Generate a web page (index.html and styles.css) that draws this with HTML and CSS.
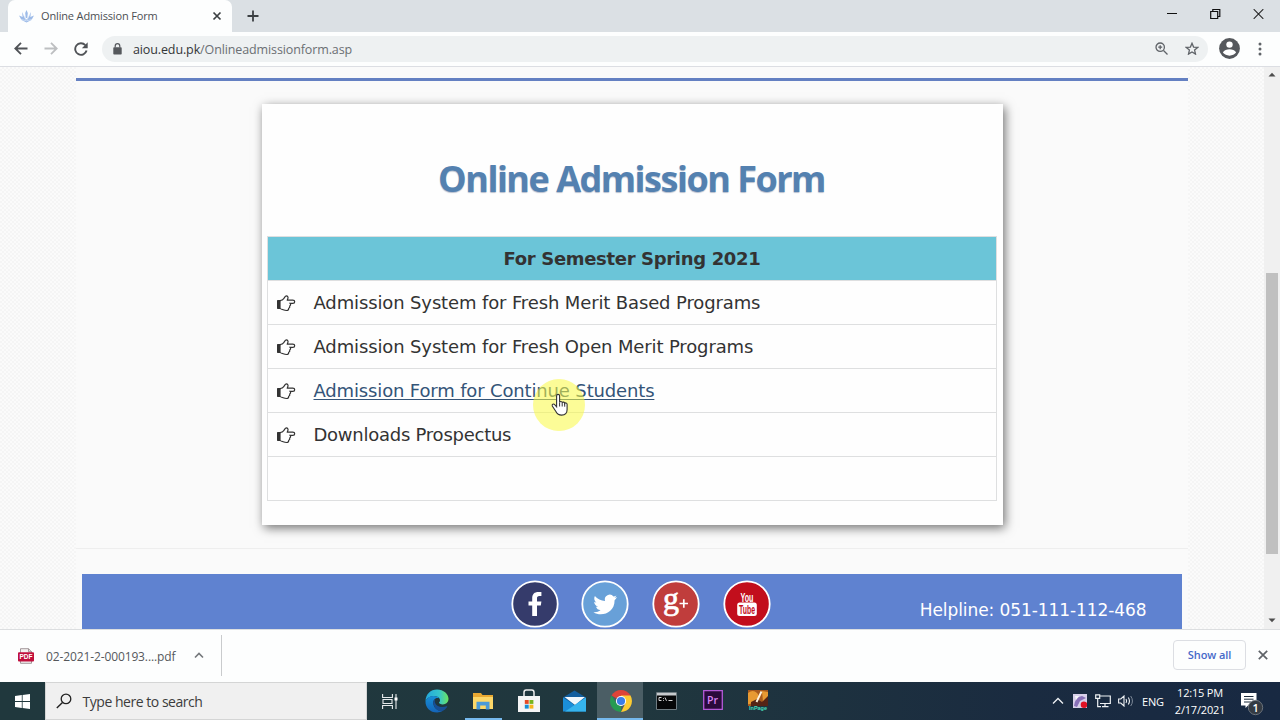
FILE: index.html
```html
<!DOCTYPE html>
<html lang="en">
<head>
    <meta charset="utf-8">
    <title>Online Admission Form</title>
    <link rel="stylesheet" href="styles.css">
</head>
<body>

    <!-- symbols used more than once -->
    <svg class="defs">
        <symbol id="hand" viewBox="0 0 20 17">
            <path d="M1 5.2h3.6v8.6H1z" fill="#333"/>
            <path d="M4.600 5.400c2 0 2.600-1.200 3.500-2.300C8.900 2.200 9.200.9 10.300.9c1.500 0 2 1.300 1.600 2.500-.2.700-.6 1.100-.6 1.700h5.500c1.300 0 1.900.8 1.900 1.600s-.7 1.600-1.900 1.600h-2.700c.9 1.200.5 2.200-.4 2.700.3 1.200-.2 2-1 2.300.1 1.500-.7 2.200-2.200 2.200-2.600 0-3.600-1.300-5.900-1.500M1.700 5.600h3M1.700 13.500h3" fill="none" stroke="#333" stroke-width="1.200"/>
        </symbol>
    </svg>

    <div class="tabs">
        <div class="tab">
            <svg class="favicon" width="15" height="13" viewBox="0 0 15 13">
                <path d="M7.500 0l1.300 3-.5 5H6.700l-.5-5zM3 2l3 6 1.500 1.500L9 8l3-6-.6 5L15 5.500 12.500 10l-5 2.600-5-2.600L0 5.500 3.600 7z" fill="#9dbbe8"/>
                <path d="M2 9.500q5.500 2.500 11 0M4 4l3 6M11 4l-3 6" stroke="#e6eefb" stroke-width=".6" fill="none"/>
            </svg>
            <span class="tab-title">Online Admission Form</span>
            <svg width="10" height="10" viewBox="0 0 10 10"><path d="M1.500 1.500l7 7M8.500 1.500l-7 7" stroke="#3c4043" stroke-width="1.700"/></svg>
        </div>
        <svg class="new-tab" width="12" height="12" viewBox="0 0 12 12"><path d="M6 .5v11M.5 6h11" stroke="#3c4043" stroke-width="1.800"/></svg>
        <div class="win-buttons">
            <svg width="10" height="10" viewBox="0 0 10 10"><path d="M0 4.500h10" stroke="#111"/></svg>
            <svg width="11" height="10" viewBox="0 0 11 10"><path d="M.7 2.500h7v7h-7zM2.800 2.500v-2h7v7H7.700" fill="none" stroke="#111" stroke-width="1.200"/></svg>
            <svg width="11" height="10" viewBox="0 0 11 10"><path d="M.7.2l9.600 9.600M10.300.2L.7 9.800" stroke="#222" stroke-width="1.100"/></svg>
        </div>
    </div>

    <div class="toolbar">
        <svg class="back" width="14" height="13" viewBox="0 0 14 13"><path d="M13.500 6.500H1.500M7 .8L1.300 6.500 7 12.200" fill="none" stroke="#505357" stroke-width="1.800"/></svg>
        <svg class="forward" width="14" height="13" viewBox="0 0 14 13"><path d="M.5 6.500h12M7 .8l5.700 5.700L7 12.200" fill="none" stroke="#bdbfc1" stroke-width="1.800"/></svg>
        <svg class="reload" width="14" height="14" viewBox="0 0 14 14"><path d="M12.600 8.600A5.800 5.800 0 1 1 11.300 3.100" fill="none" stroke="#505357" stroke-width="1.900"/><path d="M13.700.2v6H7.900z" fill="#505357"/></svg>
        <div class="address">
            <svg class="lock" width="9" height="12" viewBox="0 0 9 12"><rect x=".3" y="4.200" width="8.400" height="7.300" rx=".8" fill="#55585c"/><path d="M2.200 4.500V3a2.300 2.300 0 0 1 4.600 0v1.500" fill="none" stroke="#55585c" stroke-width="1.200"/></svg>
            <span class="url"><b>aiou.edu.pk</b>/Onlineadmissionform.asp</span>
            <svg class="zoom" width="13" height="13" viewBox="0 0 13 13"><circle cx="5.200" cy="5.200" r="4.200" fill="none" stroke="#5f6368" stroke-width="1.300"/><path d="M8.500 8.500l4 4M3.200 5.200h4M5.200 3.200v4" stroke="#5f6368" stroke-width="1.300"/></svg>
            <svg width="14" height="13" viewBox="0 0 14 13"><path d="M7 1.300l1.600 3.800 4.100.3-3.100 2.700.9 4L7 10l-3.500 2.100.9-4-3.100-2.700 4.100-.3z" fill="none" stroke="#5f6368" stroke-width="1.300"/></svg>
        </div>
        <svg class="profile" width="21" height="21" viewBox="0 0 21 21"><circle cx="10.500" cy="10.500" r="10.400" fill="#55585c"/><circle cx="10.500" cy="6.600" r="3.200" fill="#fff"/><path d="M3.900 14.600c1-2.300 4.100-3.300 6.600-3.300s5.600 1 6.600 3.300c-1.400 1.800-4 3.100-6.600 3.100s-5.200-1.300-6.600-3.100z" fill="#fff"/></svg>
        <svg class="dots" width="4" height="14" viewBox="0 0 4 14"><g fill="#5f6368"><circle cx="2" cy="2" r="1.500"/><circle cx="2" cy="7" r="1.500"/><circle cx="2" cy="12" r="1.500"/></g></svg>
    </div>

    <div class="view">
        <div class="page">
            <div class="container">
                <div class="card">
                    <h1>Online Admission Form</h1>
                    <table>
                        <tr><th>For Semester Spring 2021</th></tr>
                        <tr><td><svg class="hand"><use href="#hand"/></svg><a>Admission System for Fresh Merit Based Programs</a></td></tr>
                        <tr><td><svg class="hand"><use href="#hand"/></svg><a>Admission System for Fresh Open Merit Programs</a></td></tr>
                        <tr><td><svg class="hand"><use href="#hand"/></svg><a class="hover">Admission Form for Continue Students</a></td></tr>
                        <tr><td><svg class="hand"><use href="#hand"/></svg><a class="downloads">Downloads Prospectus</a></td></tr>
                        <tr><td></td></tr>
                    </table>
                </div>
                <hr>
                <div class="footer">
                    <div class="social">
                        <svg width="48" height="48" viewBox="0 0 48 48"><circle cx="24" cy="24" r="22.700" fill="#353b6b" stroke="#fff" stroke-width="1.800"/><path d="M21.200 36V25.600h-3.700v-4.200h3.700v-3.300c0-4.200 2.300-6.200 6.200-6.200h3v4.200h-2c-2 0-2.400.9-2.400 2.300v3h4.400l-.6 4.200H26V36z" fill="#fff"/></svg>
                        <svg width="48" height="48" viewBox="0 0 48 48"><circle cx="24" cy="24" r="22.700" fill="#68a0d8" stroke="#fff" stroke-width="1.800"/><path d="M36 17.100c-.8.400-1.700.6-2.500.7.900-.6 1.600-1.400 1.900-2.400-.9.500-1.900.9-2.900 1.100a4.900 4.900 0 0 0-8.500 4.400c-4-.2-7.700-2.100-10.100-5-1.300 2.300-.6 5.100 1.500 6.500-.8 0-1.500-.2-2.200-.6 0 2.300 1.600 4.300 4 4.900-.7.200-1.500.2-2.200.1.600 1.900 2.400 3.300 4.600 3.400a9.900 9.900 0 0 1-7.200 2c7.900 4.900 21.300 1 21.200-12 1-.7 1.800-1.700 2.400-3.100z" fill="#fff"/></svg>
                        <svg width="48" height="48" viewBox="0 0 48 48"><circle cx="24" cy="24" r="22.700" fill="#c03d3c" stroke="#fff" stroke-width="1.800"/><text x="11" y="28.500" class="gplus">g</text><path d="M27.500 23.500h8.500M31.800 19.200v8.600" stroke="#fff" stroke-width="1.700"/></svg>
                        <svg width="48" height="48" viewBox="0 0 48 48"><circle cx="24" cy="24" r="22.700" fill="#c20e1c" stroke="#fff" stroke-width="1.800"/><rect x="14.200" y="22.500" width="19.600" height="13.500" rx="2.500" fill="#fff"/><text x="17.500" y="21.500" class="yt" textLength="13" lengthAdjust="spacingAndGlyphs">You</text><text x="16" y="34" class="yt tube" textLength="16" lengthAdjust="spacingAndGlyphs">Tube</text></svg>
                    </div>
                    <span class="helpline">Helpline: 051-111-112-468</span>
                </div>
            </div>
        </div>
        <div class="scrollbar">
            <svg width="8" height="5" viewBox="0 0 8 5"><path d="M.5 4.500h7L4 .8z" fill="#4d4d4d"/></svg>
            <div class="thumb"></div>
            <svg width="8" height="5" viewBox="0 0 8 5"><path d="M.5.500h7L4 4.200z" fill="#4d4d4d"/></svg>
        </div>
    </div>

    <div class="downloads-bar">
        <svg class="pdf-icon" width="16" height="16" viewBox="0 0 16 16"><path d="M2.500.7h8l3 3v11.600h-11z" fill="#f4f0f0" stroke="#8d8083" stroke-width=".8"/><path d="M10.500.7v3h3" fill="none" stroke="#8d8083" stroke-width=".8"/><rect y="4.200" width="16" height="9.300" rx="1" fill="#c00f3c"/><text x="1.600" y="11.200" class="pdf-text" textLength="12.800">PDF</text></svg>
        <span class="file">02-2021-2-000193....pdf</span>
        <svg class="chevron" width="10" height="7" viewBox="0 0 10 7"><path d="M1 5.500l4-4 4 4" fill="none" stroke="#74777b" stroke-width="1.600"/></svg>
        <div class="line"></div>
        <button class="show-all"><span>Show all</span></button>
        <svg class="close" width="10" height="10" viewBox="0 0 10 10"><path d="M.8.8l8.400 8.400M9.200.8L.8 9.200" stroke="#5f6368" stroke-width="1.700"/></svg>
    </div>

    <div class="taskbar">
        <div class="start"><svg width="15" height="15" viewBox="0 0 15 15"><path d="M0 2.100L6.800 1.100v6H0zM7.600 1L15 0v7.100H7.600zM0 7.900h6.800v6L0 12.900zM7.600 7.900H15V15l-7.400-1z" fill="#fff"/></svg></div>
        <div class="search">
            <svg width="16" height="16" viewBox="0 0 16 16"><circle cx="10" cy="5.900" r="4.800" fill="none" stroke="#222" stroke-width="1.300"/><path d="M6.500 9.400L.8 15.100" stroke="#222" stroke-width="1.400"/></svg>
            <span>Type here to search</span>
        </div>
        <div class="app"><svg width="16" height="15" viewBox="0 0 16 15"><path d="M.6 0v3.500h9.800V0M.6 15v-3.500h9.800V15M1 5.500h9v4H1zM14 0v15" fill="none" stroke="#e6eaec" stroke-width="1.100"/><path d="M12.500 3.500h3v3h-3z" fill="#fff"/></svg></div>
        <div class="app edge-app"><svg width="24" height="24" viewBox="0 0 24 24">
            <defs>
                <linearGradient id="e1" x1="0" x2="1"><stop offset="0" stop-color="#23a8dd"/><stop offset=".6" stop-color="#36c5cb"/><stop offset="1" stop-color="#6be45e"/></linearGradient>
                <linearGradient id="e2" x1="0" x2="0" y1="0" y2="1"><stop offset="0" stop-color="#168fd7"/><stop offset="1" stop-color="#1464b8"/></linearGradient>
            </defs>
            <path d="M.5 12C.8 5 5.600.5 12 .5c6.600 0 11.400 4.400 11.500 9.300 0 3.600-2.700 5.600-5.600 5.600-2.400 0-3.900-.8-3.900-1.600 0-.7 1-1 1-2.600C15 8.600 12 7 8.800 7 5.600 7 2.300 8.800.5 12z" fill="url(#e1)"/>
            <path d="M.5 12C2 8.900 5.300 7 8.800 7c2.500 0 4.500.9 5.500 2.300C10.500 8 7.800 11 8.300 14.400c.5 4.200 4.200 8 9.200 7.700-1.500.9-3.400 1.400-5.400 1.400C5 23.500.2 18.600.5 12z" fill="url(#e2)"/>
            <path d="M10 10.300c-1.800 1.200-2 2.900-1.700 4.100.8 4.800 5.200 8.300 9.200 7.700 1.800-.9 3.400-2.300 4.600-4.100.4-.6-.1-.9-.6-.7-4.900 2-10.900.1-11.700-4.500-.1-1 0-1.700.2-2.500z" fill="#174f95"/>
        </svg></div>
        <div class="app open-app"><svg width="22" height="18" viewBox="0 0 22 18"><path d="M1 1h8l1.500 2H21v14H1z" fill="#e9a932"/><path d="M1 5h20v12H1z" fill="#fcd768"/><path d="M4.500 17.500V9.700h13v7.800h-3.700v-4h-5.600v4z" fill="#4a9ad8"/></svg></div>
        <div class="app store-app"><svg width="22" height="24" viewBox="0 0 22 24"><path d="M6 8V3.500Q6 1 8.200 1h5.600Q16 1 16 3.500V8" fill="none" stroke="#eee" stroke-width="1.500"/><path d="M0 7h22v16H0z" fill="#f5f5f5"/><path d="M6.800 11h3.900v3.900H6.800z" fill="#e64b25"/><path d="M11.500 11h3.900v3.900h-3.900z" fill="#76b41b"/><path d="M6.800 15.700h3.900v3.900H6.800z" fill="#168fd6"/><path d="M11.500 15.700h3.900v3.900h-3.900z" fill="#f5b51a"/></svg></div>
        <div class="app mail-app"><svg width="23" height="22" viewBox="0 0 23 22"><path d="M0 7.500L11.500.5 23 7.500V14H0z" fill="#135f9f"/><path d="M0 7.500L11.500 15 23 7.500v14H0z" fill="#1b8ed8"/><path d="M1.500 7h20.500l-10 8z" fill="#f2f8fc"/><path d="M23 7.500v14H2z" fill="#36b4ed"/></svg></div>
        <div class="app active-app"><svg width="22" height="22" viewBox="0 0 22 22"><path d="M11 11L1.500 5.500a11 11 0 0 1 19 0z" fill="#de4338"/><path d="M11 11v11A11 11 0 0 1 1.500 5.500L6.700 13.500z" fill="#269b51"/><path d="M11 11h-.2l4.500 2.500L11 22a11 11 0 0 0 9.500-16.500H11z" fill="#fccb32"/><circle cx="11" cy="11" r="5.100" fill="#fff"/><circle cx="11" cy="11" r="4.100" fill="#3b7de9"/></svg></div>
        <div class="app"><svg width="21" height="18" viewBox="0 0 21 18"><path d="M.5.5h20v17H.5z" fill="#060708" stroke="#707d83"/><path d="M1 1h19v2.500H1z" fill="#c6cacd"/><path d="M5.500 5.500H3v3h2.500M7.500 6v.8M7.500 8v.8M9 5.500l1.500 3.300M12.500 8.500h4" fill="none" stroke="#d8d8d8"/></svg></div>
        <div class="app pr-app"><svg width="20" height="20" viewBox="0 0 20 20"><path d="M.7.7h18.600v18.600H.7z" fill="#2a0a3c" stroke="#b45bd8" stroke-width="1.300"/><text x="4" y="14" class="pr">Pr</text></svg></div>
        <div class="app"><svg width="22" height="24" viewBox="0 0 22 24"><path d="M1 1h20v16H1z" fill="#a85a1d"/><path d="M1 4q5-4 9 0t-2 8-7 3zM15 2l6 1v7l-5 3z" fill="#e89a32"/><path d="M4 13l6-3 5 3 6-6v10H4z" fill="#552516"/><path d="M14.500 2.500L9.500 13" stroke="#fff4df" stroke-width="1.900"/><text x="2" y="20.500" class="inpage">InPage</text></svg></div>
        <div class="tray">
            <svg class="tray-up" width="12" height="8" viewBox="0 0 12 8"><path d="M1 6.500l5-5 5 5" fill="none" stroke="#eef1f4" stroke-width="1.300"/></svg>
            <svg class="tray-rec" width="14" height="14" viewBox="0 0 14 14"><path d="M0 0h14v14H0z" fill="#d8d0ea"/><path d="M1 12Q2 3 9 2l4 2-6 3-3 6z" fill="#8870b8"/><path d="M2 2h4l-3 4z" fill="#f6f6fa"/><circle cx="11" cy="10.700" r="3.300" fill="#e01224"/></svg>
            <svg class="tray-net" width="16" height="14" viewBox="0 0 16 14"><path d="M5 2h10.300v7.500H5M10 9.500v3M7 12.700h6.500M.7.800h4v3.500h-4zM2.700 4.500v8.200H6" fill="none" stroke="#eef1f4" stroke-width="1.200"/></svg>
            <svg class="tray-vol" width="16" height="12" viewBox="0 0 16 12"><path d="M.6 4h2.200L6 1v10L2.800 8H.6z" fill="none" stroke="#eef1f4" stroke-width="1.100"/><path d="M8 4q1.300 2 0 4M10.300 2.500q2.300 3.500 0 7" fill="none" stroke="#eef1f4" stroke-width="1.100"/><path d="M12.700 1q3.500 5 0 10" fill="none" stroke="#7e8a99"/></svg>
            <span class="lang">ENG</span>
            <div class="clock"><span class="time">12:15 PM</span><span class="date">2/17/2021</span></div>
            <svg class="notice" width="24" height="25" viewBox="0 0 24 25"><path d="M0 2h15.500v12.500H7L4.500 17v-2.500H0z" fill="#fff"/><path d="M3 5.500h9.500M3 8.200h9.500M3 11h7" stroke="#1b2a3b"/><circle cx="14.500" cy="16.500" r="7.200" fill="#343b43" stroke="#7c8289" stroke-width=".8"/><text x="11.400" y="20.600" class="count">1</text></svg>
        </div>
    </div>

    <!-- mouse pointer with its click highlight -->
    <div class="pointer">
        <svg width="17" height="24" viewBox="0 0 17 24"><path d="M5.600 13.800V3c0-2.200 3-2.200 3 0v6.500c.2-1.500 2.500-1.300 2.600.3.400-1.100 2.400-.9 2.500.6.500-.9 2.400-.6 2.400.9v5.200c0 3.600-2 5.600-5.500 5.600-3 0-4.600-1.400-5.700-3.600L1.300 13c-.7-1.700 1.300-2.600 2.400-1.300z" fill="#fff" stroke="#333" stroke-width="1.100"/><path d="M8.600 9.500v4M11.200 10v3.500M13.700 10.500v3.200" stroke="#333"/></svg>
    </div>

</body>
</html>
```
FILE: styles.css
```css
*{
    box-sizing: border-box;
}

body{
    margin: 0;
    width: 1280px;
    height: 720px;
    overflow: hidden;
    display: flex;
    flex-direction: column;
    font-family: "Open Sans", "Noto Sans", sans-serif;
    position: relative;
}

svg{
    display: block;
    flex-shrink: 0;
}

span, a{
    white-space: nowrap;
}

.defs{
    position: absolute;
    width: 0;
    height: 0;
}

/* browser tabs */
.tabs{
    height: 32px;
    flex-shrink: 0;
    background: #dbe0e4;
    display: flex;
    align-items: center;
    padding-left: 8px;
}

.tab{
    width: 224px;
    height: 32px;
    background: #fdfefe;
    border-radius: 7px 7px 0 0;
    display: flex;
    align-items: center;
    padding: 0 10px 0 11px;
}

.tab-title{
    flex: 1;
    margin: -2px 0 0 7px;
    font-size: 11px;
    letter-spacing: -.15px;
    color: #4c4f53;
}

.new-tab{
    margin-left: 15px;
}

.win-buttons{
    margin-left: auto;
    margin-right: 16px;
    margin-top: -5px;
    display: flex;
    gap: 32.500px;
}

/* toolbar */
.toolbar{
    height: 35px;
    flex-shrink: 0;
    background: #fdfefe;
    border-bottom: 1px solid #dcdee3;
    display: flex;
    align-items: center;
    padding: 0 0 1px 14px;
}

.forward{
    margin-left: 16px;
}

.reload{
    margin-left: 16px;
}

.address{
    width: 1106px;
    height: 26px;
    margin-left: 14px;
    border-radius: 13px;
    background: #eef1f2;
    display: flex;
    align-items: center;
    padding: 0 9px 0 11px;
}

.url{
    flex: 1;
    margin: 1px 0 0 11px;
    font-size: 12.500px;
    letter-spacing: -.12px;
    color: #6b6f73;
}

.url b{
    font-weight: normal;
    color: #333638;
}

.zoom{
    margin-right: 17px;
}

.profile{
    margin-left: 11px;
}

.dots{
    margin-left: 18px;
}

/* page */
.view{
    height: 562px;
    flex-shrink: 0;
    display: flex;
    overflow: hidden;
    font-family: "DejaVu Sans", Verdana, sans-serif;
}

.page{
    width: 1264px;
    padding-left: 76px;
    background: repeating-conic-gradient(#f5f5f5 0 25%, #fbfbfb 0 50%) 0 0 / 4px 4px;
}

.container{
    width: 1112px;
    height: 562px;
    padding-top: 11px;
    background: #fafafa;
}

.container::before{
    content: "";
    display: block;
    height: 3px;
    background: #6480c2;
}

.card{
    width: 741px;
    height: 421px;
    margin: 23px 0 0 186px;
    padding: 0 5px;
    background: #fefefe;
    box-shadow: 2px 3px 10px rgba(0,0,0,.55);
    overflow: hidden;
}

h1{
    margin: 0;
    height: 132px;
    padding: 50px 2px 0 0;
    font-family: "Open Sans", "Noto Sans", sans-serif;
    font-size: 36px;
    letter-spacing: -1.500px;
    line-height: 50px;
    text-align: center;
    color: #5481b0;
    text-shadow: 0 1px 1px #b7bfce;
}

table{
    width: 730px;
    border-collapse: collapse;
    table-layout: fixed;
}

th, td{
    height: 44px;
    padding: 0 9px;
    border: 1px solid #dedfe0;
    color: #333;
    font-size: 18px;
    letter-spacing: -.13px;
    line-height: 24px;
}

th{
    background: #6bc5d8;
    letter-spacing: -.33px;
}

td .hand{
    display: inline-block;
    width: 20px;
    height: 17px;
    margin: 0 18px 0 -1px;
    vertical-align: -3px;
}

td a{
    margin-left: -.5px;
}

.hover{
    color: #345478;
    letter-spacing: -.15px;
    text-decoration: underline;
    text-underline-offset: 2px;
}

.downloads{
    letter-spacing: -.25px;
}

hr{
    margin: 23px 0 0;
    border: 0;
    border-top: 1px solid #eee;
}

.footer{
    height: 56px;
    margin: 25px 6px 0 5.500px;
    padding: 6px 35.500px 0 429px;
    background: #5f82d0;
    display: flex;
    justify-content: space-between;
}

.social{
    display: flex;
    gap: 22.700px;
}

.gplus{
    font: 32px "Liberation Serif", serif;
    fill: #fff;
    stroke: #fff;
    stroke-width: .7px;
}

.yt{
    font: bold 13px "Liberation Sans", sans-serif;
    fill: #fff;
}

.tube{
    font-size: 12px;
    fill: #c20e1c;
}

.helpline{
    margin-top: 18px;
    font-size: 17px;
    letter-spacing: -.08px;
    line-height: 24px;
    color: #fff;
}

.scrollbar{
    width: 16px;
    background: #f0f0f0;
    display: flex;
    flex-direction: column;
    align-items: center;
    justify-content: space-between;
    padding: 5px 0 6px;
}

.thumb{
    width: 12px;
    height: 281px;
    margin-top: 131px;
    background: #c0c0c0;
}

/* downloads */
.downloads-bar{
    height: 53px;
    flex-shrink: 0;
    background: #fdfefe;
    border-top: 1px solid #dcdee0;
    display: flex;
    align-items: center;
    padding: 0 0 1px 18px;
}

.pdf-text{
    font: bold 6.500px "Liberation Sans", sans-serif;
    fill: #fff;
}

.file{
    width: 130px;
    margin: 1px 0 0 12px;
    font-size: 12px;
    letter-spacing: -.12px;
    color: #55585c;
}

.chevron{
    margin-left: 18px;
}

.line{
    width: 1px;
    height: 41px;
    margin-left: 17px;
    background: #c9cbcd;
}

.show-all{
    width: 73px;
    height: 30px;
    margin: -1px 0 0 auto;
    padding: 0 0 1px;
    border: 1px solid #dcdee3;
    border-radius: 4px;
    background: #fdfefe;
    font: 600 11px "Open Sans", sans-serif;
    letter-spacing: -.1px;
    color: #4669c9;
}

.close{
    margin: -1px 12px 0 12px;
}

/* taskbar */
.taskbar{
    height: 38px;
    flex-shrink: 0;
    display: flex;
    background: linear-gradient(90deg, #20383d, #20373e 50%, #1a2b40 80%, #182942);
    color: #fff;
}

.start{
    width: 45px;
    display: flex;
    align-items: center;
    justify-content: center;
}

.search{
    width: 322px;
    background: #f0f0f0;
    border: 1px solid #d4d5d5;
    color: #3c3c3c;
    font-size: 14px;
    letter-spacing: -.47px;
    display: flex;
    align-items: center;
    gap: 10.500px;
    padding-left: 10px;
}

.app{
    width: 46px;
    display: flex;
    align-items: center;
    justify-content: center;
}

.edge-app, .store-app{
    padding-left: 2px;
}

.mail-app{
    padding-left: 1px;
}

.open-app{
    padding-left: 2px;
    background: linear-gradient(#76b9ed, #76b9ed) 6px bottom / 37px 2px no-repeat;
}

.active-app{
    background: #4b5e65;
    border-bottom: 2px solid #76b9ed;
    padding: 2px 0 0 1px;
}

.pr-app{
    padding: 0 0 2px 1px;
}

.pr{
    font: 600 10.500px "Open Sans", sans-serif;
    fill: #d986f5;
}

.inpage{
    font: bold 5.500px "Liberation Sans", sans-serif;
    fill: #48dfbd;
}

.tray{
    margin-left: auto;
    display: flex;
    align-items: center;
    padding-right: 15px;
}

.tray-rec{
    margin-left: 9px;
}

.tray-net{
    margin-left: 8px;
}

.tray-vol{
    margin-left: 7px;
}

.lang{
    width: 22px;
    margin-left: 8px;
    font-size: 11px;
    letter-spacing: -.2px;
}

.clock{
    width: 50px;
    margin: -1px 0 0 11px;
    font-size: 11px;
    line-height: 17px;
    letter-spacing: -.2px;
    display: flex;
    flex-direction: column;
    align-items: center;
}

.notice{
    margin: 4px 0 0 16px;
}

.count{
    font: 600 11px "Open Sans", sans-serif;
    fill: #fff;
}

.pointer{
    position: absolute;
    left: 533px;
    top: 379px;
    width: 52px;
    height: 52px;
    border-radius: 50%;
    background: rgba(249,249,65,.55);
}

.pointer svg{
    position: absolute;
    left: 18px;
    top: 14px;
}
```
